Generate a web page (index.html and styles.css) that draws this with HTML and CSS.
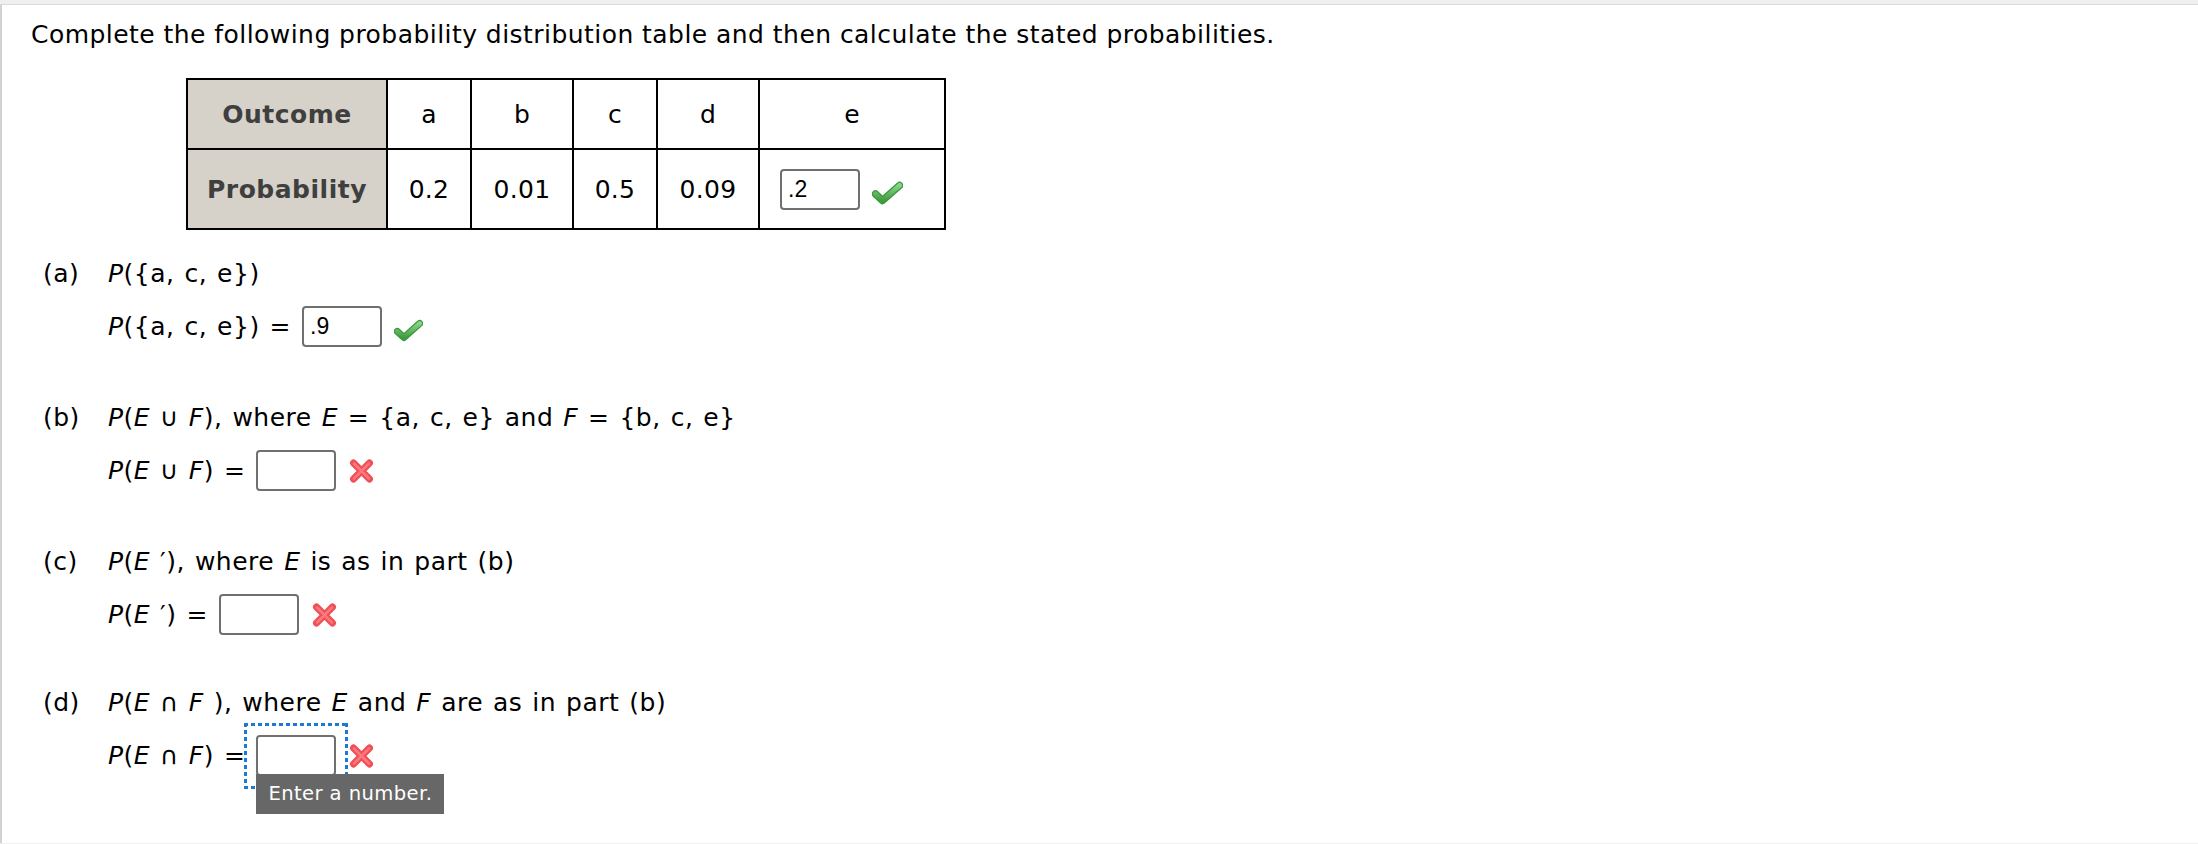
FILE: index.html
```html
<!DOCTYPE html>
<html lang="en">
<head>
<meta charset="utf-8">
<title>Probability distribution</title>
<link rel="stylesheet" href="styles.css">
</head>
<body>
<div class="panel">
  <p class="intro">Complete the following probability distribution table and then calculate the stated probabilities.</p>

  <table class="dist">
    <colgroup>
      <col class="c-head"><col class="c-a"><col class="c-b"><col class="c-c"><col class="c-d"><col class="c-e">
    </colgroup>
    <tr class="r-out">
      <th>Outcome</th><td>a</td><td>b</td><td>c</td><td>d</td><td>e</td>
    </tr>
    <tr class="r-prob">
      <th>Probability</th><td>0.2</td><td>0.01</td><td>0.5</td><td>0.09</td>
      <td class="cell-input">
        <span class="answer">
          <span class="box">.2</span>
          <svg class="mark check" viewBox="0 0 31 24" width="31" height="24" aria-hidden="true">
            <defs>
              <linearGradient id="g1" x1="0" y1="0" x2="0" y2="1">
                <stop offset="0" stop-color="#86d486"/>
                <stop offset="1" stop-color="#3f9c3f"/>
              </linearGradient>
            </defs>
            <path d="M3.5 13 L10.5 19.5 L27.5 4.5" fill="none" stroke="#3d963d" stroke-width="7.5" stroke-linejoin="round" stroke-linecap="round"/>
            <path d="M3.5 13 L10.5 19.5 L27.5 4.5" fill="none" stroke="url(#g1)" stroke-width="5" stroke-linejoin="round" stroke-linecap="round"/>
          </svg>
        </span>
      </td>
    </tr>
  </table>

  <div class="part">
    <div class="line">
      <span class="label">(a)</span>
      <span class="math"><i>P</i>({a, c, e})</span>
    </div>
    <div class="line answer-line">
      <span class="label"></span>
      <span class="math"><i>P</i>({a, c, e}) =</span>
      <span class="answer">
        <span class="box">.9</span>
        <svg class="mark check" viewBox="0 0 31 24" width="29" height="23" aria-hidden="true">
          <defs>
            <linearGradient id="g2" x1="0" y1="0" x2="0" y2="1">
              <stop offset="0" stop-color="#86d486"/>
              <stop offset="1" stop-color="#3f9c3f"/>
            </linearGradient>
          </defs>
          <path d="M3.5 13 L10.5 19.5 L27.5 4.5" fill="none" stroke="#3d963d" stroke-width="7.5" stroke-linejoin="round" stroke-linecap="round"/>
          <path d="M3.5 13 L10.5 19.5 L27.5 4.5" fill="none" stroke="url(#g2)" stroke-width="5" stroke-linejoin="round" stroke-linecap="round"/>
        </svg>
      </span>
    </div>
  </div>

  <div class="part">
    <div class="line">
      <span class="label">(b)</span>
      <span class="math"><i>P</i>(<i>E</i> ∪ <i>F</i>), where <i>E</i> = {a, c, e} and <i>F</i> = {b, c, e}</span>
    </div>
    <div class="line answer-line">
      <span class="label"></span>
      <span class="math"><i>P</i>(<i>E</i> ∪ <i>F</i>) =</span>
      <span class="answer">
        <span class="box"></span>
        <svg class="mark cross" viewBox="0 0 26 26" width="27" height="26" aria-hidden="true">
          <path d="M5 5 L21 21 M21 5 L5 21" fill="none" stroke="#f04f55" stroke-width="7" stroke-linecap="round"/>
          <path d="M5.5 5.5 L20.5 20.5 M20.5 5.5 L5.5 20.5" fill="none" stroke="#ff8a8e" stroke-width="2.5" stroke-linecap="round" opacity="0.7"/>
        </svg>
      </span>
    </div>
  </div>

  <div class="part">
    <div class="line">
      <span class="label">(c)</span>
      <span class="math"><i>P</i>(<i>E</i> ′), where <i>E</i> is as in part (b)</span>
    </div>
    <div class="line answer-line">
      <span class="label"></span>
      <span class="math"><i>P</i>(<i>E</i> ′) =</span>
      <span class="answer">
        <span class="box"></span>
        <svg class="mark cross" viewBox="0 0 26 26" width="27" height="26" aria-hidden="true">
          <path d="M5 5 L21 21 M21 5 L5 21" fill="none" stroke="#f04f55" stroke-width="7" stroke-linecap="round"/>
          <path d="M5.5 5.5 L20.5 20.5 M20.5 5.5 L5.5 20.5" fill="none" stroke="#ff8a8e" stroke-width="2.5" stroke-linecap="round" opacity="0.7"/>
        </svg>
      </span>
    </div>
  </div>

  <div class="part part-last">
    <div class="line">
      <span class="label">(d)</span>
      <span class="math"><i>P</i>(<i>E</i> ∩ <i>F</i> ), where <i>E</i> and <i>F</i> are as in part (b)</span>
    </div>
    <div class="line answer-line">
      <span class="label"></span>
      <span class="math"><i>P</i>(<i>E</i> ∩ <i>F</i>) =</span>
      <span class="answer">
        <span class="box focused"><span class="tip">Enter a number.</span></span>
        <svg class="mark cross" viewBox="0 0 26 26" width="27" height="26" aria-hidden="true">
          <path d="M5 5 L21 21 M21 5 L5 21" fill="none" stroke="#f04f55" stroke-width="7" stroke-linecap="round"/>
          <path d="M5.5 5.5 L20.5 20.5 M20.5 5.5 L5.5 20.5" fill="none" stroke="#ff8a8e" stroke-width="2.5" stroke-linecap="round" opacity="0.7"/>
        </svg>
      </span>
    </div>
  </div>
</div>
</body>
</html>
```

FILE: styles.css
```css
html, body {
  margin: 0;
  padding: 0;
}
body {
  background: #efefef;
  font-family: "DejaVu Sans", Verdana, sans-serif;
  font-size: 25px;
  color: #000;
}
.panel {
  margin-top: 4px;
  border-top: 1px solid #dadada;
  border-left: 2px solid #d2d2d2;
  background: #fff;
  min-height: 839px;
  box-sizing: border-box;
  padding: 13px 0 0 29px;
}
.intro {
  margin: 0;
  line-height: 34px;
  letter-spacing: 0.45px;
}
.dist {
  margin: 26px 0 0 155px;
  border-collapse: collapse;
  table-layout: fixed;
  width: 759px;
}
.c-head { width: 200px; }
.c-a { width: 84px; }
.c-b { width: 102px; }
.c-c { width: 84px; }
.c-d { width: 102px; }
.c-e { width: 186px; }
.dist th, .dist td {
  border: 2px solid #000;
  padding: 0;
  text-align: center;
  font-weight: normal;
  letter-spacing: 0.3px;
}
.dist th {
  background: #d6d2ca;
  color: #3f3f3f;
  font-weight: bold;
  letter-spacing: 0.5px;
}
.r-out th, .r-out td { height: 68px; }
.r-prob th, .r-prob td { height: 78px; }
.dist .cell-input {
  text-align: left;
  padding-left: 20px;
}
.answer {
  display: inline-flex;
  align-items: center;
  gap: 12px;
  vertical-align: middle;
}
.box {
  position: relative;
  display: block;
  box-sizing: border-box;
  width: 80px;
  height: 41px;
  border: 2px solid #707070;
  border-radius: 4px;
  background: #fff;
  font-family: "Liberation Sans", Arial, sans-serif;
  font-size: 23px;
  line-height: 37px;
  padding-left: 6px;
  color: #000;
  letter-spacing: 0;
}
.mark { display: block; flex: none; }
.check { margin-top: 8px; }
.part {
  margin-top: 27px;
  margin-left: 12px;
}
.part + .part { margin-top: 54px; }
.part + .part-last { margin-top: 51px; }
.line {
  display: flex;
  align-items: center;
  line-height: 34px;
  height: 34px;
}
.answer-line {
  height: 41px;
  margin-top: 15px;
}
.label {
  width: 65px;
  flex: none;
  letter-spacing: 0.45px;
}
.math {
  white-space: pre;
  letter-spacing: 0.5px;
  word-spacing: 1.5px;
}
.math + .answer { margin-left: 11px; }
.focused::before {
  content: "";
  position: absolute;
  left: -14px;
  top: -14px;
  right: -14px;
  bottom: -15px;
  background:
    linear-gradient(to right, #1a7ad4 55%, transparent 55%) top left / 7px 3px repeat-x,
    linear-gradient(to right, #1a7ad4 55%, transparent 55%) bottom left / 7px 3px repeat-x,
    linear-gradient(to bottom, #1a7ad4 55%, transparent 55%) top left / 3px 7px repeat-y,
    linear-gradient(to bottom, #1a7ad4 55%, transparent 55%) top right / 3px 7px repeat-y;
  pointer-events: none;
}
.tip {
  position: absolute;
  z-index: 2;
  left: -2px;
  top: 100%;
  margin-top: 0;
  height: 40px;
  line-height: 40px;
  padding: 0 12px;
  background: #676767;
  color: #fff;
  font-family: "DejaVu Sans", Verdana, sans-serif;
  font-size: 19.6px;
  letter-spacing: 0.4px;
  white-space: nowrap;
}
```
